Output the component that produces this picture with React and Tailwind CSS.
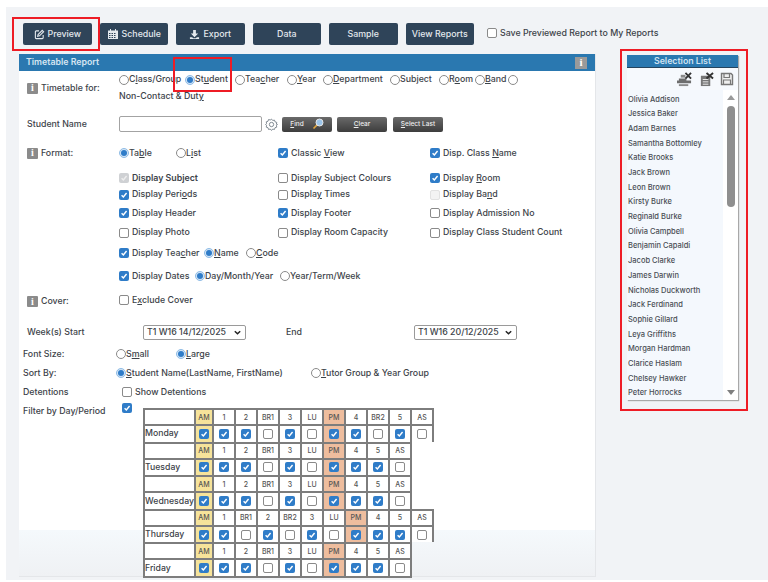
import React from "react";

function U({ t, u }) {
  const i = u == null ? -1 : u;
  if (i < 0) return t;
  return (<>{t.slice(0, i)}<span className="underline">{t[i]}</span>{t.slice(i + 1)}</>);
}

function Tick({ color }) {
  return <svg width="8" height="8" viewBox="0 0 10 10"><path d="M2 5.2 L4.2 7.4 L8.2 2.6" stroke={color} strokeWidth="1.8" fill="none" /></svg>;
}
function Check({ on, dim, light }) {
  if (dim) return <span className="inline-flex h-[10px] w-[10px] shrink-0 items-center justify-center rounded-[2px] bg-[#cfd1d4]"><Tick color="#eeeeee" /></span>;
  if (light) return <span className="inline-block h-[10px] w-[10px] shrink-0 rounded-[2px] border border-[#e2e2e2] bg-[#f3f3f3]" />;
  if (on) return <span className="inline-flex h-[10px] w-[10px] shrink-0 items-center justify-center rounded-[2px] bg-[#2f7cc8]"><Tick color="#fff" /></span>;
  return <span className="inline-block h-[10px] w-[10px] shrink-0 rounded-[2px] border border-[#8a8a8a] bg-white" />;
}
function Radio({ on }) {
  if (on) return <span className="inline-flex h-[10px] w-[10px] shrink-0 items-center justify-center rounded-full border border-[#8fbce6] bg-[#d4e5f6]"><span className="h-[6px] w-[6px] rounded-full bg-[#2f7cc8]" /></span>;
  return <span className="inline-block h-[10px] w-[10px] shrink-0 rounded-full border border-[#8a8a8a] bg-white" />;
}
function Info() {
  return <span className="inline-flex h-[11px] w-[11px] shrink-0 items-center justify-center rounded-[1px] bg-[#8b8b8b] font-['Liberation_Serif',serif] text-[10px] font-bold leading-none text-white">i</span>;
}
function R({ t, u, on, className = "" }) {
  return <span className={"flex items-center " + className}><Radio on={on} /><span className="whitespace-nowrap"><U t={t} u={u} /></span></span>;
}
function C({ t, u, on, dim, light, className = "" }) {
  return <span className={"flex items-center gap-[3px] " + className}><Check on={on} dim={dim} light={light} /><span className="whitespace-nowrap"><U t={t} u={u} /></span></span>;
}
function Btn({ children }) {
  return <span className="flex h-[22px] w-[68.5px] items-center justify-center gap-[3px] rounded-[2px] bg-[#2f4459] text-[8.8px] font-medium text-[#e4e9ee]">{children}</span>;
}
function Mini({ children, w }) {
  return <span className={"flex h-[15px] items-center justify-center gap-2 rounded-[2px] bg-gradient-to-b from-[#6a6a6a] to-[#3d3d3d] text-[6.5px] font-medium text-[#eeeeee] " + w}>{children}</span>;
}
function Row({ h, label, children, className = "" }) {
  return (
    <div className={"flex items-center " + h + " " + className}>
      <div className="w-[92px] shrink-0">{label}</div>
      {children}
    </div>
  );
}
function ILabel({ t }) {
  return <span className="flex items-center gap-[3px]"><Info /><span>{t}</span></span>;
}
function Chev() {
  return <svg width="9" height="9" viewBox="0 0 10 10"><path d="M2 3.5 L5 6.5 L8 3.5" stroke="#222" strokeWidth="1.6" fill="none" /></svg>;
}
function Opts({ h, a, b, c, className = "" }) {
  return (
    <div className={"flex items-center pl-[92px] " + h + " " + className}>
      <div className="w-[159px]">{a}</div>
      <div className="w-[152px]">{b}</div>
      <div>{c}</div>
    </div>
  );
}
function Sel({ t }) {
  return <span className="flex h-[15px] w-[103px] items-center justify-between whitespace-nowrap rounded-[2px] border border-[#9a9a9a] bg-white px-[3px]">{t}<Chev /></span>;
}

const names = ["Olivia Addison","Jessica Baker","Adam Barnes","Samantha Bottomley","Katie Brooks","Jack Brown","Leon Brown","Kirsty Burke","Reginald Burke","Olivia Campbell","Benjamin Capaldi","Jacob Clarke","James Darwin","Nicholas Duckworth","Jack Ferdinand","Sophie Gillard","Leya Griffiths","Morgan Hardman","Clarice Haslam","Chelsey Hawker","Peter Horrocks"];

const std = [["AM",1],["1",1],["2",1],["BR1",0],["3",1],["LU",0],["PM",1],["4",1],["5",1],["AS",0]];
const days = [
  { day: "Monday", cells: [["AM",1],["1",1],["2",1],["BR1",0],["3",1],["LU",0],["PM",1],["4",1],["BR2",0],["5",1],["AS",0]] },
  { day: "Tuesday", cells: std },
  { day: "Wednesday", cells: std },
  { day: "Thursday", cells: [["AM",1],["1",1],["BR1",0],["2",1],["BR2",0],["3",1],["LU",0],["PM",1],["4",1],["5",1],["AS",0]] },
  { day: "Friday", cells: std },
];

function cellBg(n) {
  if (n === "AM") return "bg-[#f6e39a]";
  if (n === "PM") return "bg-[#eebd9e]";
  return "bg-white";
}

function DayTable({ d, last }) {
  return (
    <div className={"flex w-fit flex-col gap-[2px] bg-[#7d7d7d] px-[2px] pt-[2px] " + (last ? "pb-[2px]" : "")}>
      <div className="flex gap-[2px]">
        <div className="h-[14px] w-[49px] bg-white" />
        {d.cells.map((c, i) => (
          <div key={i} className={"flex h-[14px] items-center justify-center text-[7px] font-medium text-[#555] " + (c[0] === "AM" ? "w-[16px] " : "w-[20px] ") + cellBg(c[0])}>{c[0]}</div>
        ))}
      </div>
      <div className="flex gap-[2px]">
        <div className="flex h-[15.6px] w-[49px] items-center overflow-hidden whitespace-nowrap bg-white text-[8.7px]">{d.day}</div>
        {d.cells.map((c, i) => (
          <div key={i} className={"flex h-[15.6px] items-center justify-center " + (c[0] === "AM" ? "w-[16px] " : "w-[20px] ") + cellBg(c[0])}><Check on={!!c[1]} /></div>
        ))}
      </div>
    </div>
  );
}

export default function App() {
  return (
    <div className="h-[582px] w-[768px] overflow-hidden bg-white font-['Inter',sans-serif] text-[8.8px] font-medium leading-none text-[#3d4349]">
      <div className="relative ml-[6px] mt-[7px] h-[573px] bg-[#f1f3f6] pl-[13px]">
        {/* toolbar */}
        <div className="flex h-[47px] items-center pt-[16px] pb-[9px]">
          <div className="ml-[4px] flex gap-[8px]">
            <Btn><svg width="11" height="11" viewBox="0 0 24 24" fill="none" stroke="#e4e9ee" strokeWidth="2.4"><path d="M11 4H5a2 2 0 0 0-2 2v13a2 2 0 0 0 2 2h13a2 2 0 0 0 2-2v-6" /><path d="M18 3l3 3-9 9-4 1 1-4z" /></svg>Preview</Btn>
            <Btn><svg width="12" height="12" viewBox="0 0 24 24" fill="#e4e9ee"><path d="M2 5h20v17H2z" /><path d="M6 2h2v4H6zM16 2h2v4h-2z" /><path d="M4 10h3v2H4zM9 10h3v2H9zM14 10h3v2h-3zM4 14h3v2H4zM9 14h3v2H9zM14 14h3v2h-3zM4 18h3v2H4zM9 18h3v2H9zM14 18h3v2h-3z" fill="#2f4459" /></svg>Schedule</Btn>
            <Btn><svg width="11" height="11" viewBox="0 0 24 24" fill="#e4e9ee"><path d="M9 2h6v8h5l-8 8-8-8h5z" /><path d="M2 18h5l2 2h6l2-2h5v4H2z" /></svg>Export</Btn>
            <Btn>Data</Btn>
            <Btn>Sample</Btn>
            <Btn>View Reports</Btn>
          </div>
          <C t="Save Previewed Report to My Reports" className="mb-[2px] ml-[13px] gap-[3px]" />
        </div>

        <div className="flex">
          {/* main panel */}
          <div className="h-[523px] w-[577px] shrink-0 border-r border-b border-[#e4e6e9] bg-[linear-gradient(to_bottom,#ffffff_476px,#f5f9fc_476px,#eff1f4_100%)]">
            <div className="flex h-[17px] items-center justify-between bg-[#2a78b0] pl-[7px] pr-[8px] font-semibold text-[#d5e5f2]">
              <span>Timetable Report</span>
              <span className="inline-flex h-[12px] w-[12px] items-center justify-center bg-[#9a9a9a] font-['Liberation_Serif',serif] text-[11px] font-bold text-white">i</span>
            </div>

            <div className="pl-[8px]">
              <Row h="h-[33px]" label={<span className="block pt-[1px]"><ILabel t="Timetable for:" /></span>}>
                <div className="flex flex-col gap-[7px]">
                  <div className="flex items-center whitespace-nowrap">
                    <R t="Class/Group" u={1} className="w-[66px]" />
                    <R on t="Student" u={2} className="w-[50px]" />
                    <R t="Teacher" u={3} className="w-[52px]" />
                    <R t="Year" u={0} className="w-[36px]" />
                    <R t="Department" u={0} className="w-[67px]" />
                    <R t="Subject" className="w-[49px]" />
                    <R t="Room" u={1} className="w-[36px]" />
                    <R t="Band" u={0} className="w-[33px]" />
                    <Radio />
                  </div>
                  <span><U t="Non-Contact & Duty" u={17} /></span>
                </div>
              </Row>
              <Row h="h-[38px]" className="pt-[2px]" label="Student Name">
                <span className="h-[16px] w-[143px] rounded-[2px] border border-[#a3a3a3] bg-white" />
                <svg className="ml-[3px]" width="13" height="13" viewBox="0 0 24 24" fill="none" stroke="#6f7a83" strokeWidth="1.6"><path d="M12 2l2.2 2.6 3.3-.7 1 3.2 3.2 1-.7 3.3L23 12l-2 1.6.7 3.3-3.2 1-1 3.2-3.3-.7L12 23l-2.2-2.6-3.3.7-1-3.2-3.2-1 .7-3.3L1 12l2-1.6-.7-3.3 3.2-1 1-3.2 3.3.7z" /><circle cx="12" cy="12" r="4" /></svg>
                <Mini w="ml-[4px] w-[50px]"><span><U t="Find" u={0} /></span><svg width="12" height="12" viewBox="0 0 24 24"><path d="M3 21l8-8" stroke="#e0a640" strokeWidth="3.5" /><circle cx="15" cy="9" r="7" fill="#9ac4ea" stroke="#e8e8e8" strokeWidth="2" /></svg></Mini>
                <Mini w="ml-[5px] w-[50px]"><span><U t="Clear" u={0} /></span></Mini>
                <Mini w="ml-[6px] w-[50px]"><span><U t="Select Last" u={0} /></span></Mini>
              </Row>
              <Row h="h-[20px]" className="pt-[2px]" label={<ILabel t="Format:" />}>
                <div className="flex items-center">
                  <R on t="Table" u={2} className="w-[57px]" />
                  <R t="List" u={1} className="w-[102px]" />
                  <C on t="Classic View" u={8} className="w-[152px]" />
                  <C on t="Disp. Class Name" u={12} />
                </div>
              </Row>
              <Opts h="h-[18px]" className="mt-[6px] pt-[2px]" a={<C dim t="Display Subject" className="font-semibold" />} b={<C t="Display Subject Colours" />} c={<C on t="Display Room" u={8} />} />
              <Opts h="h-[17px]" a={<C on t="Display Periods" u={12} />} b={<C t="Display Times" u={6} />} c={<C light t="Display Band" u={10} />} />
              <Opts h="h-[20px]" a={<C on t="Display Header" />} b={<C on t="Display Footer" />} c={<C t="Display Admission No" />} />
              <Opts h="h-[19px]" a={<C t="Display Photo" />} b={<C t="Display Room Capacity" />} c={<C t="Display Class Student Count" />} />
              <div className="flex h-[22px] items-center pl-[92px]">
                <C on t="Display Teacher" u={11} className="w-[85px]" />
                <R on t="Name" u={0} className="w-[42px]" />
                <R t="Code" u={0} />
              </div>
              <div className="flex h-[24px] items-center pl-[92px]">
                <C on t="Display Dates" className="w-[76px]" />
                <R on t="Day/Month/Year" className="w-[85px]" />
                <R t="Year/Term/Week" />
              </div>
              <Row h="h-[24px]" className="pt-[3px]" label={<ILabel t="Cover:" />}>
                <C t="Exclude Cover" u={1} className="mb-[3px]" />
              </Row>
              <div className="flex h-[33px] items-center pt-[7px]">
                <span className="w-[116px]">Week(s) Start</span>
                <Sel t="T1 W16 14/12/2025" />
                <span className="ml-[40px] w-[128px]">End</span>
                <Sel t="T1 W16 20/12/2025" />
              </div>
            </div>

            <div className="pl-[4px]">
              <div className="flex h-[16px] items-center pt-[2px]">
                <span className="w-[93px]">Font Size:</span>
                <R t="Small" u={1} className="w-[60px]" />
                <R on t="Large" u={0} />
              </div>
              <div className="flex h-[21px] items-center pt-[3px]">
                <span className="w-[93px]">Sort By:</span>
                <R on t="Student Name(LastName, FirstName)" u={0} className="w-[195px]" />
                <R t="Tutor Group & Year Group" u={0} />
              </div>
              <div className="flex h-[18px] items-center pt-[2px]">
                <span className="w-[99px]">Detentions</span>
                <C t="Show Detentions" />
              </div>
              <div className="flex items-start">
                <span className="w-[99px] whitespace-nowrap pt-[7px]">Filter by Day/Period</span>
                <div className="w-[21px] pt-[3px]"><Check on /></div>
                <div className="flex flex-col pt-[8px]">
                  {days.map((d, i) => <DayTable key={d.day} d={d} last={i === days.length - 1} />)}
                </div>
              </div>
            </div>
          </div>

          {/* selection list */}
          <div className="ml-[31px] mt-[1px] w-[111px] self-start bg-[#f6f9fd] shadow-[1px_1px_1px_#a8a8a8]">
            <div className="flex h-[13px] items-center justify-center border-b border-[#24445e] bg-[#2a78b0] font-semibold text-[#cfe2f1]">Selection List</div>
            <div className="flex h-[22px] items-center justify-end gap-[6px] pr-[4px]">
              <svg width="17" height="15" viewBox="0 0 18 16"><path d="M3 7h8v2h5v3H1V9h2z" fill="#6e6e6e" /><path d="M5 3h5v3H5z" fill="#8a8a8a" /><path d="M3 13h10v2H3z" fill="#8a8a8a" /><path d="M10 1l6 6M16 1l-6 6" stroke="#333" strokeWidth="2" /></svg>
              <svg width="15" height="15" viewBox="0 0 16 16"><path d="M2 4h10v11H2z" fill="#777" /><path d="M4 8h6M4 10.5h6M4 13h6" stroke="#eee" strokeWidth="1" /><path d="M8 1l7 6M15 1l-7 6" stroke="#333" strokeWidth="2" /></svg>
              <svg width="14" height="14" viewBox="0 0 14 14"><path d="M1.5 1.5h9.5l1.5 1.5v9.5h-11z" fill="#eee" stroke="#777" strokeWidth="1.4" /><path d="M4 2v3.5h5.5V2M3.5 12V8h7v4" fill="none" stroke="#777" strokeWidth="1.2" /></svg>
            </div>
            <div className="flex h-[310px] bg-white">
              <div className="w-[96px] overflow-hidden bg-[#f4f8fd] pl-[1px] pt-[2px] text-[7.5px] text-[#4a4e55]">
                {names.map((n) => <div key={n} className="flex h-[14.7px] items-center whitespace-nowrap">{n}</div>)}
              </div>
              <div className="flex w-[15px] flex-col items-center pt-[5px]">
                <span className="h-0 w-0 border-x-[4px] border-b-[5px] border-x-transparent border-b-[#9a9a9a]" />
                <span className="mt-[6px] h-[101px] w-[8px] rounded-full bg-[#8f8f8f]" />
                <span className="mb-[5px] mt-auto h-0 w-0 border-x-[4px] border-t-[5px] border-x-transparent border-t-[#7f7f7f]" />
              </div>
            </div>
          </div>
        </div>

        {/* red callouts lying over the page */}
        <span className="absolute left-[6px] top-[10px] h-[34px] w-[88px] border-[2px] border-[#ee1c25]" />
        <span className="absolute left-[167px] top-[50px] h-[35px] w-[59px] border-[2px] border-[#ee1c25]" />
        <span className="absolute left-[614px] top-[42px] h-[362px] w-[128px] border-[2px] border-[#ee1c25]" />
      </div>
    </div>
  );
}
